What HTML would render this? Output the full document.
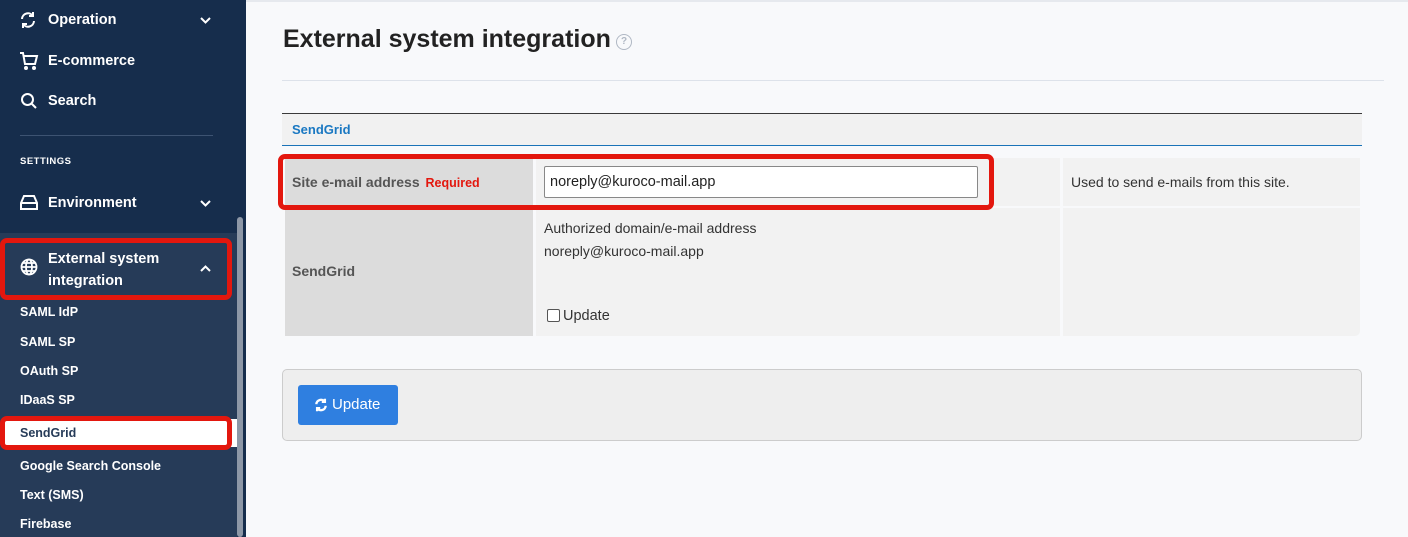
<!DOCTYPE html>
<html><head><style>
*{box-sizing:border-box;margin:0;padding:0}
body{width:1408px;height:537px;overflow:hidden;background:#f8f9fb;font-family:"Liberation Sans",sans-serif;position:relative}
.a{position:absolute}
.sb{left:0;top:0;width:246px;height:537px;background:#162d4c}
.sub{left:0;top:233px;width:237px;height:304px;background:#263b58}
.nav{color:#fff;font-size:14.5px;font-weight:600}
.subi{color:#fff;font-size:12.5px;font-weight:600;left:20px}
.red{border:5px solid #e3170e;border-radius:7px}
.cell{background:#f2f2f2}
.lab{background:#dcdcdc;color:#555;font-weight:700;font-size:14px}
</style></head><body>
<div class="a sb"></div>
<div class="a sub"></div>
<div class="a" style="left:237px;top:217px;width:6px;height:320px;background:#8d97a6;border-radius:3px"></div>
<div class="a" style="left:20px;top:135px;width:193px;height:1px;background:#3d5372"></div>

<svg class="a" style="left:19px;top:11px" width="18" height="18" viewBox="0 0 18 18" fill="none" stroke="#fff" stroke-width="2"><path d="M3 8a6 6 0 0 1 11-3M15 10a6 6 0 0 1-11 3"/><path d="M14 1v4h-4M4 17v-4h4"/></svg>
<div class="a nav" style="left:48px;top:12px">Operation</div>
<svg class="a" style="left:200px;top:17px" width="11" height="7" viewBox="0 0 11 7" fill="none" stroke="#fff" stroke-width="2"><path d="M1 1l4.5 4.5L10 1"/></svg>
<svg class="a" style="left:19px;top:52px" width="20" height="18" viewBox="0 0 20 18" fill="none" stroke="#fff" stroke-width="2"><path d="M1 1h3l2 11h10l2-8H5"/><circle cx="7" cy="16" r="1"/><circle cx="15" cy="16" r="1"/></svg>
<div class="a nav" style="left:48px;top:53px">E-commerce</div>
<svg class="a" style="left:20px;top:92px" width="18" height="18" viewBox="0 0 18 18" fill="none" stroke="#fff" stroke-width="2"><circle cx="7.5" cy="7.5" r="5.5"/><path d="M12 12l4 4"/></svg>
<div class="a nav" style="left:48px;top:93px">Search</div>
<div class="a" style="left:20px;top:156px;color:#fff;font-size:9.5px;font-weight:700;letter-spacing:.5px">SETTINGS</div>
<svg class="a" style="left:19px;top:194px" width="20" height="18" viewBox="0 0 20 18" fill="none" stroke="#fff" stroke-width="2"><path d="M2 9l3-7h10l3 7v6H2z M2 9h16"/></svg>
<div class="a nav" style="left:48px;top:195px">Environment</div>
<svg class="a" style="left:200px;top:200px" width="11" height="7" viewBox="0 0 11 7" fill="none" stroke="#fff" stroke-width="2"><path d="M1 1l4.5 4.5L10 1"/></svg>

<div class="a red" style="left:0;top:238px;width:232px;height:62px;background:#263b58"></div>
<svg class="a" style="left:20px;top:258px" width="18" height="18" viewBox="0 0 18 18" fill="none" stroke="#fff" stroke-width="1.8"><circle cx="9" cy="9" r="7.5"/><ellipse cx="9" cy="9" rx="3" ry="7.5"/><path d="M1.5 9h15M3 5h12M3 13h12"/></svg>
<div class="a nav" style="left:48px;top:248px;line-height:22px">External system<br>integration</div>
<svg class="a" style="left:200px;top:265px" width="11" height="7" viewBox="0 0 11 7" fill="none" stroke="#fff" stroke-width="2"><path d="M1 6l4.5-4.5L10 6"/></svg>

<div class="a subi" style="top:305px">SAML IdP</div>
<div class="a subi" style="top:335px">SAML SP</div>
<div class="a subi" style="top:364px">OAuth SP</div>
<div class="a subi" style="top:393px">IDaaS SP</div>
<div class="a" style="left:4px;top:419px;width:233px;height:28px;background:#fff"></div>
<div class="a red" style="left:0;top:416px;width:232px;height:34px"></div>
<div class="a subi" style="top:426px;color:#263b58">SendGrid</div>
<div class="a subi" style="top:459px">Google Search Console</div>
<div class="a subi" style="top:488px">Text (SMS)</div>
<div class="a subi" style="top:517px">Firebase</div>

<div class="a" style="left:246px;top:0;width:1162px;height:2px;background:#e6e9ee"></div>
<div class="a" style="left:283px;top:25px;font-size:25px;font-weight:700;color:#222">External system integration</div>
<div class="a" style="left:616px;top:34px;width:16px;height:16px;border:1.5px solid #b0b8c4;border-radius:50%;color:#b0b8c4;font-size:10px;text-align:center;line-height:13px;font-weight:700;transform:translateX(0)">?</div>
<div class="a" style="left:282px;top:80px;width:1102px;height:1px;background:#dde2ea"></div>

<div class="a" style="left:282px;top:113px;width:1080px;height:33px;background:#f1f1f1;border-top:1px solid #3a3a3a;border-bottom:1px solid #1a73b8"></div>
<div class="a" style="left:292px;top:122px;color:#1a78c2;font-size:13px;font-weight:700">SendGrid</div>

<div class="a lab" style="left:285px;top:158px;width:248px;height:48px"></div>
<div class="a cell" style="left:536px;top:158px;width:524px;height:48px"></div>
<div class="a cell" style="left:1063px;top:158px;width:297px;height:48px"></div>
<div class="a lab" style="left:285px;top:208px;width:248px;height:128px"></div>
<div class="a cell" style="left:536px;top:208px;width:524px;height:128px"></div>
<div class="a cell" style="left:1063px;top:208px;width:297px;height:128px;border-radius:0 0 5px 0"></div>

<div class="a red" style="left:278px;top:154px;width:716px;height:56px"></div>
<div class="a" style="left:292px;top:174px;font-size:14px;font-weight:700;color:#555">Site e-mail address <span style="color:#e3170e;font-size:12.5px;margin-left:2px">Required</span></div>
<div class="a" style="left:544px;top:166px;width:434px;height:32px;background:#fff;border:1px solid #888;border-radius:2px;padding:7px 5px;font-size:14.5px;color:#222">noreply@kuroco-mail.app</div>
<div class="a" style="left:1071px;top:174px;font-size:14px;color:#333">Used to send e-mails from this site.</div>
<div class="a" style="left:292px;top:263px;font-size:14px;font-weight:700;color:#555">SendGrid</div>
<div class="a" style="left:544px;top:217px;font-size:14px;color:#333;line-height:23px">Authorized domain/e-mail address<br>noreply@kuroco-mail.app</div>
<div class="a" style="left:547px;top:309px;width:13px;height:13px;border:1px solid #555;border-radius:2px;background:#fff"></div>
<div class="a" style="left:563px;top:308px;font-size:14.5px;color:#333">Update</div>

<div class="a" style="left:282px;top:369px;width:1080px;height:72px;background:#eeeeee;border:1px solid #ccc;border-radius:5px"></div>
<div class="a" style="left:298px;top:385px;width:100px;height:40px;background:#2f7fe0;border-radius:3px"></div>
<svg class="a" style="left:314px;top:398px" width="14" height="14" viewBox="0 0 18 18" fill="none" stroke="#fff" stroke-width="3"><path d="M3 8a6 6 0 0 1 11-3M15 10a6 6 0 0 1-11 3"/><path d="M14 1v4h-4M4 17v-4h4"/></svg>
<div class="a" style="left:332px;top:396px;color:#fff;font-size:15px">Update</div>
</body></html>
